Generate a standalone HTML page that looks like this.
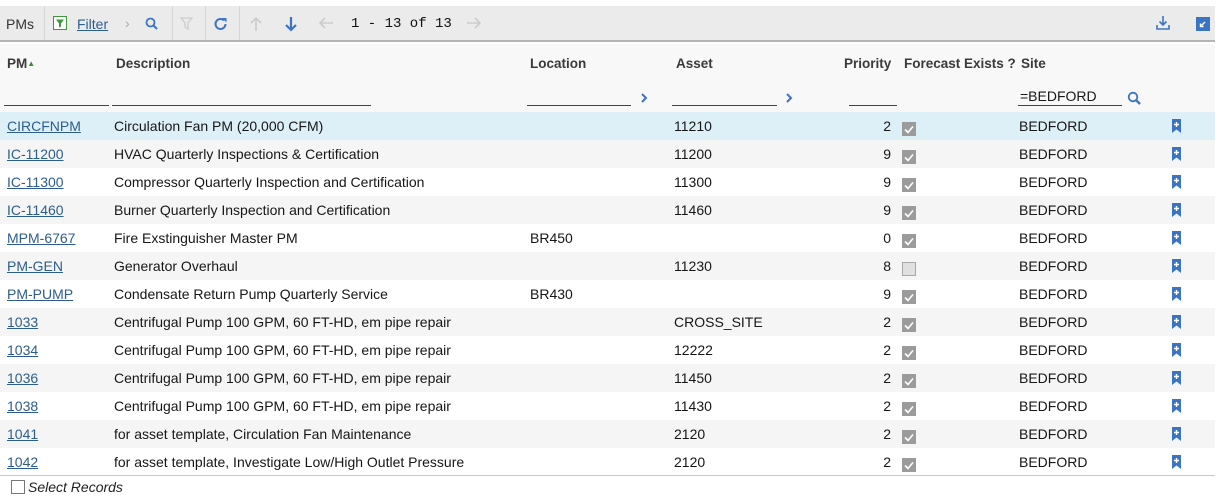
<!DOCTYPE html>
<html><head><meta charset="utf-8"><style>
*{margin:0;padding:0;box-sizing:border-box}
body{width:1230px;height:499px;background:#fff;font-family:"Liberation Sans",sans-serif;font-size:14px;color:#161616;position:relative;overflow:hidden}
.a{position:absolute;white-space:nowrap}
.tb{position:absolute;left:0;top:6px;width:1215px;height:36px;background:#ebebeb;border-bottom:2px solid #b4b4b4}
.sep{position:absolute;top:0;width:1px;height:34px;background:#d6d6d6}
.hd{position:absolute;left:0;top:44px;width:1215px;height:68px;background:#f8f8f8}
.th{position:absolute;top:56px;font-weight:bold;color:#3a3a3a;font-size:13.5px}
.fl{position:absolute;top:105px;height:1px;background:#444}
.row{position:absolute;left:0;width:1215px;height:28px}
.row span{position:absolute;top:6px;white-space:nowrap}
.lk{color:#2d5d8f;text-decoration:underline}
.cb{position:absolute;left:902px;top:10px;width:14px;height:14px;background:#9b9b9b}
.cb.e{background:#e0e0e0;border:1px solid #a8a8a8}
.bm{position:absolute;left:1172px;top:7px}
</style></head><body>
<div class="tb">
<span class="a" style="left:6px;top:10px;color:#333">PMs</span>
<div class="sep" style="left:44px"></div>
<svg class="a" style="left:53px;top:10px" width="14" height="14"><rect x="0.5" y="0.5" width="13" height="13" fill="#fff" stroke="#3c9a3c"/><path d="M3 3.5h8l-3 4v3l-2 1v-4z" fill="#3c9a3c"/></svg>
<span class="a lk" style="left:77px;top:10px">Filter</span>
<span class="a" style="left:125px;top:9px;color:#aaa">›</span>
<svg class="a" style="left:145px;top:11px" width="14" height="14"><circle cx="5.5" cy="5.5" r="4" fill="none" stroke="#3c74c4" stroke-width="1.8"/><path d="M8.5 8.5l3.5 3.5" stroke="#3c74c4" stroke-width="2"/></svg>
<div class="sep" style="left:172px"></div>
<svg class="a" style="left:180px;top:11px" width="14" height="14"><path d="M1 1h11l-4 5v6l-3-2v-4z" fill="none" stroke="#ccc" stroke-width="1.2"/></svg>
<div class="sep" style="left:205px"></div>
<svg class="a" style="left:213px;top:10px" width="16" height="16"><path d="M12.5 8a5 5 0 1 1-1.5-3.6" fill="none" stroke="#3c74c4" stroke-width="2"/><path d="M9 2h4.5v4.5z" fill="#3c74c4"/></svg>
<div class="sep" style="left:239px"></div>
<svg class="a" style="left:249px;top:10px" width="14" height="16"><path d="M7 15V2M2 7l5-5 5 5" fill="none" stroke="#ccc" stroke-width="1.6"/></svg>
<svg class="a" style="left:284px;top:10px" width="14" height="16"><path d="M7 1v13M2 9l5 5 5-5" fill="none" stroke="#3c74c4" stroke-width="2.2"/></svg>
<svg class="a" style="left:318px;top:10px" width="16" height="14"><path d="M15 7H2M7 2L2 7l5 5" fill="none" stroke="#ccc" stroke-width="1.6"/></svg>
<span class="a" style="left:351px;top:10px;font-family:'Liberation Mono',monospace;font-size:14px;color:#111">1 - 13 of 13</span>
<svg class="a" style="left:466px;top:10px" width="16" height="14"><path d="M1 7h13M9 2l5 5-5 5" fill="none" stroke="#ccc" stroke-width="1.6"/></svg>
<svg class="a" style="left:1156px;top:9px" width="14" height="16"><path d="M7 1v9M3.5 6.5L7 10l3.5-3.5M1 10v4h12v-4" fill="none" stroke="#3c74c4" stroke-width="1.6"/></svg>
<svg class="a" style="left:1196px;top:11px" width="14" height="14"><rect width="14" height="14" fill="#3c74c4"/><path d="M9 5L4.5 9.5M4.5 6.5v3h3" fill="none" stroke="#fff" stroke-width="1.4"/></svg>
</div>
<div class="hd"></div>
<span class="th" style="left:7px">PM<span style="color:#3a8a3a;font-size:8px;vertical-align:2px">▲</span></span>
<span class="th" style="left:116px">Description</span>
<span class="th" style="left:530px">Location</span>
<span class="th" style="left:676px">Asset</span>
<span class="th" style="left:844px">Priority</span>
<span class="th" style="left:904px">Forecast Exists ?</span>
<span class="th" style="left:1021px">Site</span>
<div class="fl" style="left:4px;width:105px"></div>
<div class="fl" style="left:112px;width:259px"></div>
<div class="fl" style="left:527px;width:104px"></div>
<div class="fl" style="left:672px;width:105px"></div>
<div class="fl" style="left:849px;width:48px"></div>
<div class="fl" style="left:1018px;width:104px"></div>
<svg class="a" style="left:640px;top:93px" width="8" height="10"><path d="M2 1l4 4-4 4" fill="none" stroke="#3c74c4" stroke-width="2"/></svg>
<svg class="a" style="left:785px;top:93px" width="8" height="10"><path d="M2 1l4 4-4 4" fill="none" stroke="#3c74c4" stroke-width="2"/></svg>
<span class="a" style="left:1020px;top:88px">=BEDFORD</span>
<svg class="a" style="left:1127px;top:91px" width="16" height="16"><circle cx="6" cy="6" r="4.3" fill="none" stroke="#3c74c4" stroke-width="1.8"/><path d="M9.2 9.2l3.8 3.8" stroke="#3c74c4" stroke-width="2.4"/></svg>

<div id="rows"></div>
<div class="a" style="left:0;top:475px;width:1215px;height:1px;background:#c8c8c8"></div>
<div class="a" style="left:11px;top:480px;width:14px;height:14px;border:1px solid #777;background:#fff"></div>
<span class="a" style="left:28px;top:479px;font-style:italic;color:#222">Select Records</span>

<script>
var d=[["CIRCFNPM","Circulation Fan PM (20,000 CFM)","","11210","2",1],
["IC-11200","HVAC Quarterly Inspections &amp; Certification","","11200","9",1],
["IC-11300","Compressor Quarterly Inspection and Certification","","11300","9",1],
["IC-11460","Burner Quarterly Inspection and Certification","","11460","9",1],
["MPM-6767","Fire Exstinguisher Master PM","BR450","","0",1],
["PM-GEN","Generator Overhaul","","11230","8",0],
["PM-PUMP","Condensate Return Pump Quarterly Service","BR430","","9",1],
["1033","Centrifugal Pump 100 GPM, 60 FT-HD, em pipe repair","","CROSS_SITE","2",1],
["1034","Centrifugal Pump 100 GPM, 60 FT-HD, em pipe repair","","12222","2",1],
["1036","Centrifugal Pump 100 GPM, 60 FT-HD, em pipe repair","","11450","2",1],
["1038","Centrifugal Pump 100 GPM, 60 FT-HD, em pipe repair","","11430","2",1],
["1041","for asset template, Circulation Fan Maintenance","","2120","2",1],
["1042","for asset template, Investigate Low/High Outlet Pressure","","2120","2",1]];
var h="";
d.forEach(function(r,i){
var bg=i==0?"#ddf0f8":(i%2?"#f5f5f5":"#fff");
h+='<div class="row" style="top:'+(112+i*28)+'px;background:'+bg+'">'+
'<span class="lk" style="left:7px">'+r[0]+'</span>'+
'<span style="left:114px">'+r[1]+'</span>'+
'<span style="left:530px">'+r[2]+'</span>'+
'<span style="left:674px">'+r[3]+'</span>'+
'<span style="right:324px">'+r[4]+'</span>'+
(r[5]?'<div class="cb"><svg width="14" height="14"><path d="M3 7.5l3 3 5-6" fill="none" stroke="#fff" stroke-width="1.6"/></svg></div>':'<div class="cb e"></div>')+
'<span style="left:1019px">BEDFORD</span>'+
'<svg class="bm" width="9" height="14"><path d="M0 0h9v14l-4.5-3.5L0 14z" fill="#3c74c4"/><path d="M4.5 3v5M2 5.5h5" stroke="#fff" stroke-width="1.4"/></svg></div>';
});
document.getElementById("rows").innerHTML=h;
</script>
</body></html>
